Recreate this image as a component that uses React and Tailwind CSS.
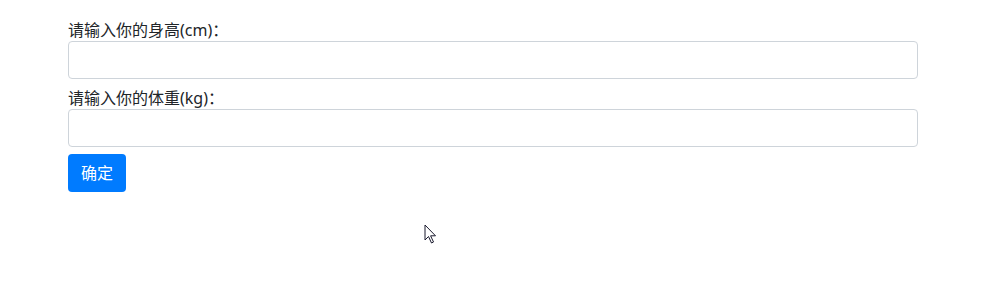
export default function App() {
  return (
    <div
      className="relative h-[299px] w-full bg-white text-[16px] text-[#212529]"
      style={{ fontFamily: '"Noto Sans", "Noto Sans CJK SC", sans-serif' }}
    >
      <div className="ml-[68px] flex w-[850px] flex-col pt-[19px]">
        <label className="h-[22px] leading-[22px]">请输入你的身高(cm)：</label>
        <input
          type="text"
          className="h-[38px] w-full rounded border border-[#ced4da] bg-white px-3 outline-none"
        />
        <label className="mt-[8px] h-[22px] leading-[22px]">请输入你的体重(kg)：</label>
        <input
          type="text"
          className="h-[38px] w-full rounded border border-[#ced4da] bg-white px-3 outline-none"
        />
        <div className="mt-[7px]">
          <button className="h-[38px] w-[58px] rounded bg-[#007bff] text-[16px] text-white">
            确定
          </button>
        </div>
      </div>

      {/* mouse pointer */}
      <svg
        className="absolute left-[424px] top-[224px]"
        width="14"
        height="22"
        viewBox="0 0 14 22"
      >
        <path
          d="M1 1 L1 16 L4.5 12.5 L7.5 19 L9.5 18 L6.6 11.8 L11.5 11.8 Z"
          fill="#fff"
          stroke="#1a1a2e"
          strokeWidth="1"
          strokeLinejoin="round"
        />
      </svg>
    </div>
  );
}
